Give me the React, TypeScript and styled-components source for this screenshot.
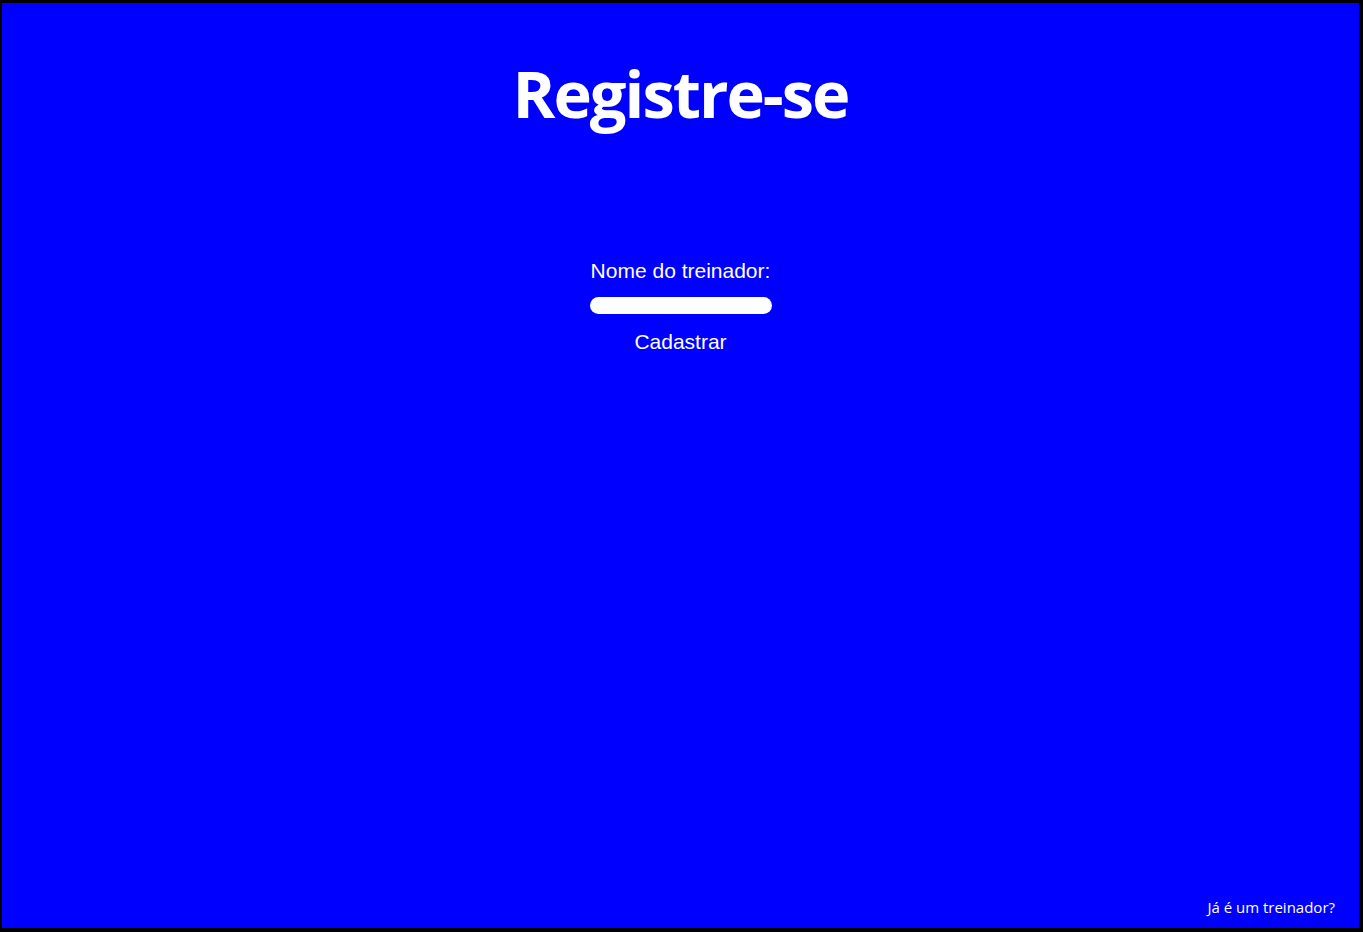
import React from "react";
import styled, { createGlobalStyle } from "styled-components";

const GlobalStyle = createGlobalStyle`
  html, body {
    margin: 0;
    padding: 0;
    background: #000;
  }
`;

const Page = styled.div`
  box-sizing: border-box;
  width: 1363px;
  height: 932px;
  border-style: solid;
  border-color: #000;
  border-width: 3px 4px 4px 2px;
  background: #0000ff;
  color: #fff;
  display: flex;
  flex-direction: column;
  align-items: center;
`;

const Title = styled.h1`
  margin: 50px 0 0;
  font-family: "Open Sans", "Noto Sans", sans-serif;
  font-weight: 700;
  font-size: 65px;
  line-height: 80px;
  letter-spacing: -2px;
`;

const Form = styled.form`
  margin-top: 126px;
  display: flex;
  flex-direction: column;
  align-items: center;
  font-family: "Liberation Sans", Arial, sans-serif;
  font-size: 21px;
`;

const Label = styled.label`
  line-height: 24px;
`;

const Input = styled.input`
  box-sizing: border-box;
  margin-top: 14px;
  width: 182px;
  height: 17px;
  border: none;
  border-radius: 9px;
  background: #fff;
  outline: none;
`;

const Submit = styled.button`
  margin-top: 16px;
  padding: 0;
  border: none;
  background: transparent;
  color: #fff;
  font-family: "Liberation Sans", Arial, sans-serif;
  font-size: 21px;
  line-height: 24px;
  cursor: pointer;
`;

const Footer = styled.div`
  margin-top: auto;
  align-self: flex-end;
  padding: 0 24px 11px 0;
  font-family: "Open Sans", "Noto Sans", sans-serif;
  font-size: 15px;
  line-height: 20px;
`;

export default function App() {
  return (
    <>
      <GlobalStyle />
      <Page>
        <Title>Registre-se</Title>
        <Form onSubmit={e => e.preventDefault()}>
          <Label htmlFor="trainer">Nome do treinador:</Label>
          <Input id="trainer" type="text" />
          <Submit type="submit">Cadastrar</Submit>
        </Form>
        <Footer>Já é um treinador?</Footer>
      </Page>
    </>
  );
}
